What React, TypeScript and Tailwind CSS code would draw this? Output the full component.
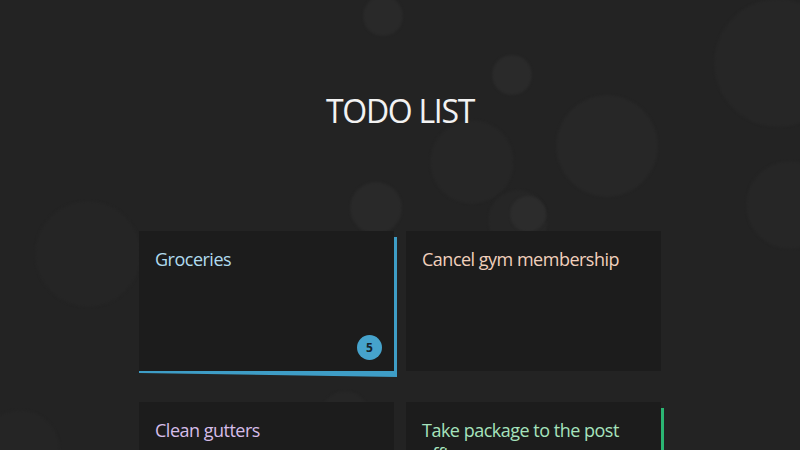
import React from "react";

const circles: { x: number; y: number; r: number; c: string }[] = [
  { x: 383, y: 16, r: 20, c: "bg-[#292929]" },
  { x: 512, y: 75, r: 20, c: "bg-[#2a2a2a]" },
  { x: 472, y: 162, r: 42, c: "bg-[#262626]" },
  { x: 607, y: 146, r: 51, c: "bg-[#272727]" },
  { x: 376, y: 208, r: 26, c: "bg-[#292929]" },
  { x: 518, y: 220, r: 30, c: "bg-[#262626]" },
  { x: 528, y: 214, r: 18, c: "bg-[#2c2c2c]" },
  { x: 778, y: 63, r: 64, c: "bg-[#262626]" },
  { x: 790, y: 205, r: 44, c: "bg-[#262626]" },
  { x: 88, y: 254, r: 53, c: "bg-[#252525]" },
  { x: 345, y: 415, r: 24, c: "bg-[#262626]" },
  { x: 20, y: 450, r: 40, c: "bg-[#252525]" },
];

type Card = {
  title: string;
  color: string;
  accent?: string;
  badge?: string;
};

const cards: Card[] = [
  { title: "Groceries", color: "text-[#b0dbee]", accent: "bg-[#3e9dc6]", badge: "5" },
  { title: "Cancel gym membership", color: "text-[#f1d0bc]" },
  { title: "Clean gutters", color: "text-[#d6bde9]" },
  { title: "Take package to the post office", color: "text-[#a6e3bd]", accent: "bg-[#2bb673]" },
];

export default function App() {
  return (
    <div
      className="relative w-full h-[450px] overflow-hidden bg-[#232323]"
      style={{ fontFamily: '"Open Sans", "Noto Sans", sans-serif' }}
    >
      {circles.map((c, i) => (
        <div
          key={i}
          className={`absolute rounded-full blur-[1px] ${c.c}`}
          style={{ left: c.x - c.r, top: c.y - c.r, width: c.r * 2, height: c.r * 2 }}
        />
      ))}
      <div className="relative flex flex-col items-center pt-[89px]">
        <h1 className="text-[32px] leading-[44px] font-normal text-[#f2f2f2] tracking-[-1.3px]">
          TODO LIST
        </h1>
        <div className="grid grid-cols-[255px_255px] gap-x-[12px] gap-y-[31px] mt-[98px]">
          {cards.map((card, i) => (
            <div key={i} className="relative">
              {card.accent && (
                <div
                  className={`absolute left-0 top-[6px] -right-[3px] -bottom-[6px] ${card.accent} [clip-path:polygon(100%_0,100%_100%,0_calc(100%-4px),0_0)]`}
                />
              )}
              <div className="relative h-[140px] bg-[#1c1c1c] pt-[16px] pl-[16px] pr-[16px]">
                <p className={`text-[18px] leading-[24px] tracking-[-0.5px] ${card.color}`}>{card.title}</p>
                {card.badge && (
                  <div className="absolute right-[12px] bottom-[11px] w-[25px] h-[25px] rounded-full bg-[#46a3cc] flex items-center justify-center text-[12px] font-bold text-[#15222a]">
                    {card.badge}
                  </div>
                )}
              </div>
            </div>
          ))}
        </div>
      </div>
    </div>
  );
}
